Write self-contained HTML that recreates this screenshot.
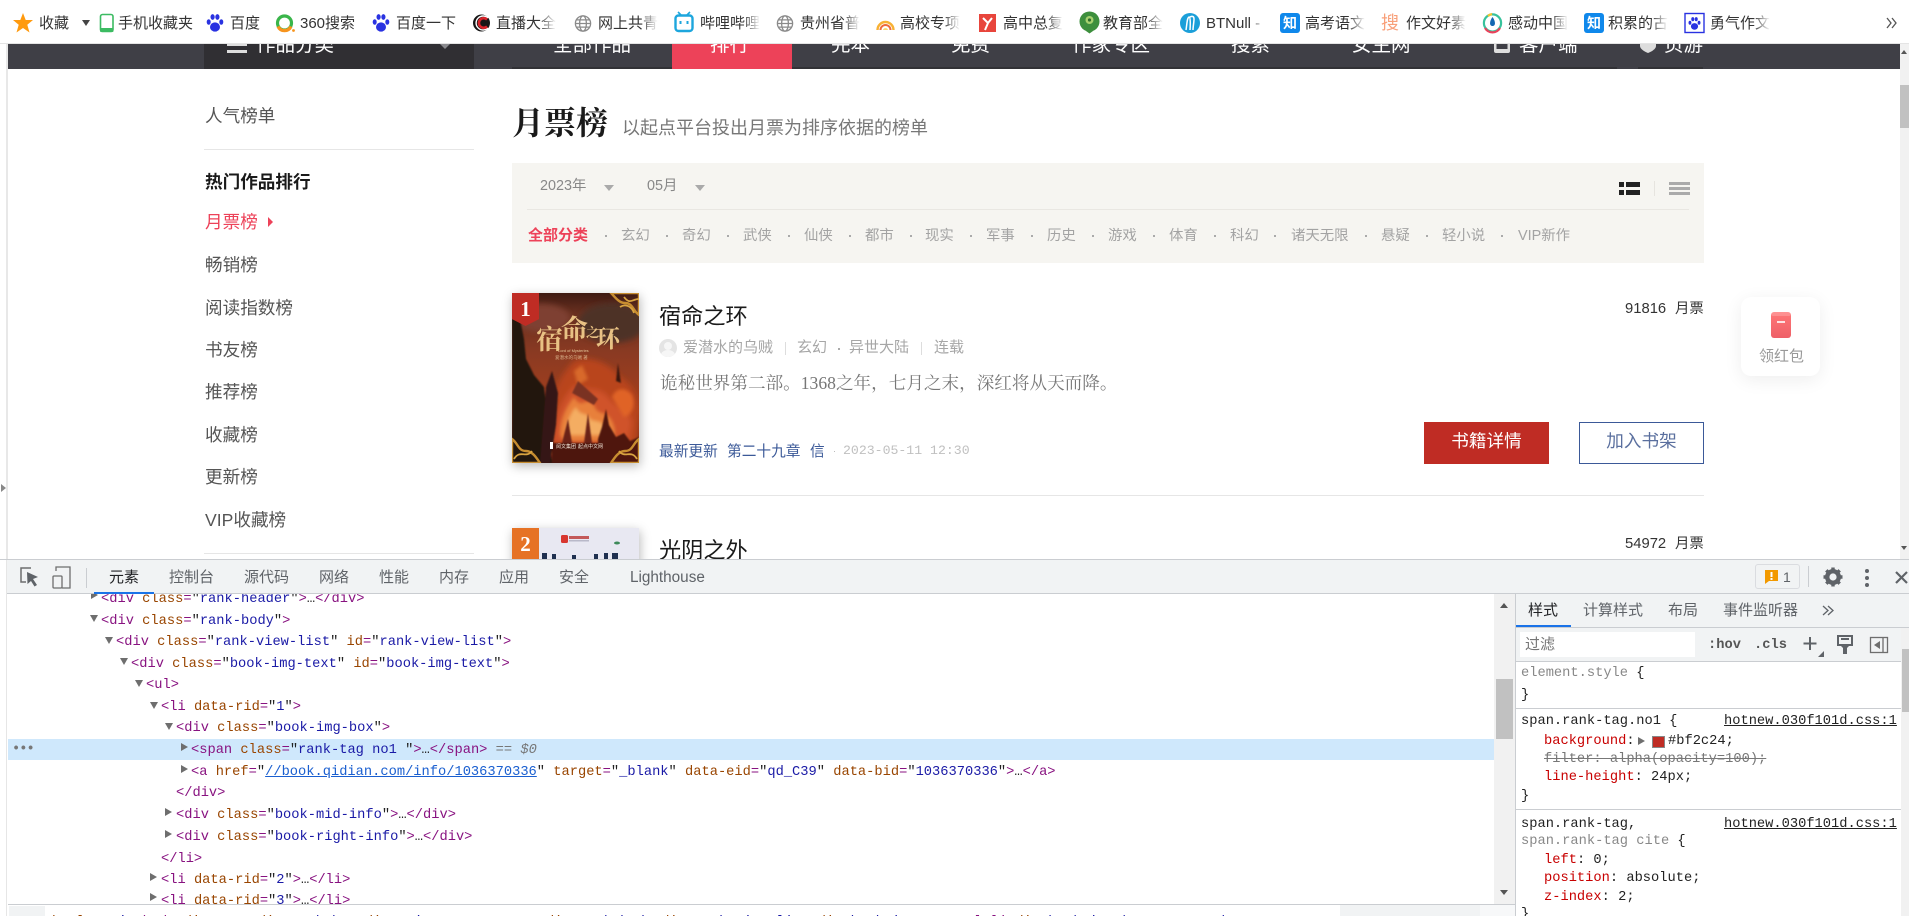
<!DOCTYPE html>
<html lang="zh"><head><meta charset="utf-8"><title>月票榜</title>
<style>
*{box-sizing:border-box;margin:0;padding:0}
html,body{width:1909px;height:916px;overflow:hidden;background:#fff}
body{position:relative;font-family:"Liberation Sans","Noto Sans CJK SC",sans-serif;color:#333}
.a{position:absolute}
.t{position:absolute;white-space:nowrap;line-height:20px}
.bm{font-size:15px;color:#333;top:14px}
.f{width:60px;overflow:hidden;-webkit-mask-image:linear-gradient(90deg,#000 72%,transparent);mask-image:linear-gradient(90deg,#000 72%,transparent)}
.nv{font-size:19.5px;color:#fff;top:35px}
.sd{font-size:17.6px;color:#555;left:205px}
.c{font-size:14.4px;color:#a3a3a3;top:226px}
.d{position:absolute;width:2px;height:2px;background:#aaa;top:235px}
.tb{font-size:15px;color:#5f6368;top:568px}
.m{font-family:"Liberation Mono","Noto Sans CJK SC",monospace;font-size:13.72px;color:#222}
.g{color:#881280}.n{color:#994500}.v{color:#1a1aa6}
.ad,.ar{position:absolute;width:0;height:0}
.ad{border-left:4.5px solid transparent;border-right:4.5px solid transparent;border-top:7px solid #6e6e6e}
.ar{border-top:4.5px solid transparent;border-bottom:4.5px solid transparent;border-left:7px solid #6e6e6e}
.p{color:#c80000}
.l{text-decoration:underline;color:#222}
</style></head><body>

<!-- bookmarks bar -->
<div class="a" style="left:0;top:0;width:1909px;height:44px;background:#fff;border-bottom:1px solid #e4e4e4"></div>
<svg class="a" style="left:0;top:0" width="1909" height="44">
<defs><g id="paw"><ellipse cx="0" cy="4" rx="5" ry="4.6"/><ellipse cx="-6.3" cy="-1" rx="2" ry="2.8"/><ellipse cx="-2.4" cy="-6" rx="2.1" ry="2.9"/><ellipse cx="2.4" cy="-6" rx="2.1" ry="2.9"/><ellipse cx="6.3" cy="-1" rx="2" ry="2.8"/></g>
<g id="globe" fill="none" stroke="#8a8a8a" stroke-width="1.3"><circle r="7.6"/><ellipse rx="3.4" ry="7.6"/><path d="M-7.6 0H7.6M-6.6-3.6H6.6M-6.6 3.6H6.6"/></g></defs>
<polygon points="23,13 25.700,20 33,20 27.300,24.800 29.500,32.500 23,28 16.500,32.500 18.700,24.800 13,20 20.300,20" fill="#ff9a0e"/>
<polygon points="82,20 90,20 86,26" fill="#444"/>
<rect x="100.5" y="14.5" width="12.5" height="17" rx="2" fill="#fff" stroke="#3cbb62" stroke-width="1.600"/><rect x="100" y="28" width="13.5" height="4" rx="1" fill="#3cbb62"/>
<use href="#paw" x="215" y="23" fill="#2932e1"/>
<circle cx="284.5" cy="23" r="7" fill="none" stroke="#3ab54a" stroke-width="3.2"/><path d="M278 26.500a7.200 7.200 0 0 0 13 0" fill="none" stroke="#f7941d" stroke-width="3.2"/><circle cx="293.500" cy="30.500" r="1.4" fill="#f7941d"/>
<use href="#paw" x="381" y="23" fill="#2932e1"/>
<circle cx="481.5" cy="23" r="8.5" fill="#161616"/><path d="M488 18a7 7 0 1 0 0 10" fill="none" stroke="#fff" stroke-width="1.4"/><path d="M487 19.5a4.8 4.8 0 1 0 0 7" fill="none" stroke="#d8232a" stroke-width="2.6"/>
<use href="#globe" x="583" y="23.5"/>
<path d="M678 12l3 3M690 12l-3 3" stroke="#1da6dd" stroke-width="1.6"/><rect x="675.5" y="15.5" width="17" height="15.5" rx="3" fill="#fff" stroke="#1da6dd" stroke-width="2.4"/><rect x="679.5" y="21" width="2" height="3" fill="#1da6dd"/><rect x="686.5" y="21" width="2" height="3" fill="#1da6dd"/>
<use href="#globe" x="785" y="23.5"/>
<path d="M877.5 30a8 8 0 0 1 16 0" fill="none" stroke="#f8b133" stroke-width="2.4"/><path d="M880.5 30a5 5 0 0 1 10 0" fill="none" stroke="#ee6a3c" stroke-width="2"/><path d="M883 30a2.6 2.6 0 0 1 5 0" fill="#f8d66b"/>
<rect x="979" y="14" width="17" height="18" fill="#e8453c"/><path d="M983 18l5 5 4-5M988 23l-3 7" stroke="#fff" stroke-width="2" fill="none"/>
<circle cx="1089.5" cy="21.5" r="10" fill="#3d8f3d"/><path d="M1086 31l3.5 2.5 3.5-2.5z" fill="#3d8f3d"/><circle cx="1089.5" cy="20" r="4" fill="#a6d16f"/><circle cx="1089.5" cy="20" r="1.6" fill="#2d6e2d"/>
<circle cx="1190" cy="23" r="10" fill="#1b9fd9"/><path d="M1186 30c1-6 1-12 3-13 2 0 1 13 1 13M1190 17c2-1 4-1 4 2 0 3-1 8-1 11" fill="none" stroke="#fff" stroke-width="1.5"/>
<rect x="1280" y="13" width="20" height="20" rx="3" fill="#0f88eb"/>
<circle cx="1492.5" cy="23" r="8.6" fill="#fff" stroke="#38c29c" stroke-width="2.2"/><path d="M1485 28a8.6 8.6 0 0 0 15 0" fill="none" stroke="#e9415b" stroke-width="2.2"/><path d="M1488 16a8.6 8.6 0 0 1 4-2" fill="none" stroke="#f7c32e" stroke-width="2.2"/><path d="M1492.5 17c-3 4-3.500 9 0 9s3-5 0-9z" fill="#1367b2"/>
<rect x="1584" y="13" width="20" height="20" rx="3" fill="#0f88eb"/>
<rect x="1685" y="13.500" width="19" height="19" fill="#fff" stroke="#2932e1" stroke-width="1.400"/><use href="#paw" transform="translate(1694.500 23.500) scale(.72)" fill="#2932e1"/>
<path d="M1887 18l4 5-4 5M1892 18l4 5-4 5" stroke="#555" stroke-width="1.300" fill="none"/>
</svg>
<div class="t" style="left:1283px;top:13px;font-size:14px;color:#fff;font-weight:700">知</div>
<div class="t" style="left:1587px;top:13px;font-size:14px;color:#fff;font-weight:700">知</div>
<div class="t" style="left:1381px;top:13px;font-size:18px;color:#f8a07a">搜</div>
<div class="t bm" style="left:39px">收藏</div>
<div class="t bm" style="left:118px">手机收藏夹</div>
<div class="t bm" style="left:230px">百度</div>
<div class="t bm" style="left:300px">360搜索</div>
<div class="t bm" style="left:396px">百度一下</div>
<div class="t bm f" style="left:496px">直播大全</div>
<div class="t bm f" style="left:598px">网上共青</div>
<div class="t bm f" style="left:700px">哔哩哔哩</div>
<div class="t bm f" style="left:800px">贵州省普</div>
<div class="t bm f" style="left:900px">高校专项</div>
<div class="t bm f" style="left:1003px">高中总复</div>
<div class="t bm f" style="left:1103px">教育部全</div>
<div class="t bm f" style="left:1206px">BTNull -</div>
<div class="t bm f" style="left:1305px">高考语文</div>
<div class="t bm f" style="left:1406px">作文好素</div>
<div class="t bm f" style="left:1508px">感动中国</div>
<div class="t bm f" style="left:1608px">积累的古</div>
<div class="t bm f" style="left:1710px">勇气作文</div>

<!-- page viewport -->
<div class="a" style="left:0;top:44px;width:1909px;height:515px;overflow:hidden;background:#fff">
 <div style="position:absolute;left:-0px;top:-44px;width:1909px;height:603px">
  <div class="a" style="left:6px;top:44px;width:2px;height:515px;background:#e8e8e8"></div>
  <!-- nav -->
  <div class="a" style="left:8px;top:44px;width:1892px;height:25px;background:#3f3f46"></div>
  <div class="a" style="left:204px;top:44px;width:270px;height:25px;background:#302f33"></div>
  <div class="a" style="left:512px;top:67px;width:160px;height:2px;background:#323236"></div>
  <div class="a" style="left:792px;top:67px;width:825px;height:2px;background:#323236"></div>
  <div class="a" style="left:1638px;top:67px;width:65px;height:2px;background:#323236"></div>
  <div class="a" style="left:672px;top:44px;width:120px;height:25px;background:#ed4259"></div>
  <div class="a" style="left:227px;top:44px;width:20px;height:2px;background:#ddd"></div>
  <div class="a" style="left:227px;top:50px;width:20px;height:3px;background:#ddd"></div>
  <div class="a" style="left:440px;top:44px;width:0;height:0;border-left:5px solid transparent;border-right:5px solid transparent;border-top:5px solid #8a8a8e"></div>
  <div class="t nv" style="left:256px">作品分类</div>
  <div class="t nv" style="left:553px">全部作品</div>
  <div class="t nv" style="left:710px">排行</div>
  <div class="t nv" style="left:831px">完本</div>
  <div class="t nv" style="left:951px">免费</div>
  <div class="t nv" style="left:1072px">作家专区</div>
  <div class="t nv" style="left:1231px">搜索</div>
  <div class="t nv" style="left:1352px">女生网</div>
  <svg class="a" style="left:1494px;top:44px" width="16" height="10"><rect x="0" y="-6" width="16" height="15" rx="2" fill="#ddd"/><rect x="2.500" y="0" width="11" height="5" fill="#3f3f46"/></svg>
  <div class="t nv" style="left:1519px">客户端</div>
  <svg class="a" style="left:1640px;top:44px" width="16" height="10"><path d="M0 0H16V2C16 5 11 8 8 9 5 8 0 5 0 2Z" fill="#ddd"/></svg>
  <div class="t nv" style="left:1664px">页游</div>

  <!-- sidebar -->
  <div class="t sd" style="top:106px">人气榜单</div>
  <div class="a" style="left:204px;top:149px;width:270px;height:1px;background:#e6e6e6"></div>
  <div class="t sd" style="top:172px;color:#1a1a1a;font-weight:700">热门作品排行</div>
  <div class="t sd" style="top:212px;color:#ed4259">月票榜</div>
  <div class="a" style="left:268px;top:217px;width:0;height:0;border-top:5px solid transparent;border-bottom:5px solid transparent;border-left:5px solid #ed4259"></div>
  <div class="t sd" style="top:255px">畅销榜</div>
  <div class="t sd" style="top:298px">阅读指数榜</div>
  <div class="t sd" style="top:340px">书友榜</div>
  <div class="t sd" style="top:382px">推荐榜</div>
  <div class="t sd" style="top:425px">收藏榜</div>
  <div class="t sd" style="top:467px">更新榜</div>
  <div class="t sd" style="top:510px">VIP收藏榜</div>
  <div class="a" style="left:204px;top:553px;width:270px;height:1px;background:#e6e6e6"></div>

  <!-- header -->
  <div class="t" style="left:512px;top:103px;line-height:40px;font-family:'Liberation Serif','Noto Serif CJK SC',serif;font-weight:700;font-size:32px;color:#1a1a1a">月票榜</div>
  <div class="t" style="left:622px;top:118px;font-size:18px;color:#777">以起点平台投出月票为排序依据的榜单</div>

  <!-- filter -->
  <div class="a" style="left:512px;top:163px;width:1192px;height:100px;background:#f6f5f1"></div>
  <div class="a" style="left:527px;top:209px;width:1162px;height:1px;background:#e9e7e2"></div>
  <div class="t" style="left:540px;top:176px;font-size:14.400px;color:#888">2023年</div>
  <div class="a" style="left:604px;top:185px;width:0;height:0;border-left:5px solid transparent;border-right:5px solid transparent;border-top:6px solid #aaa"></div>
  <div class="t" style="left:647px;top:176px;font-size:14.400px;color:#888">05月</div>
  <div class="a" style="left:695px;top:185px;width:0;height:0;border-left:5px solid transparent;border-right:5px solid transparent;border-top:6px solid #aaa"></div>
  <svg class="a" style="left:1619px;top:181px" width="72" height="16">
   <path d="M0 1h5v5H0zM7 1h14v5H7zM0 9h5v5H0zM7 9h14v5H7z" fill="#222"/>
   <rect x="35" y="-2" width="1" height="17" fill="#e6e4df"/>
   <path d="M50 1h21v3H50zM50 6h21v3H50zM50 11h21v3H50z" fill="#aaa"/>
  </svg>
  <div class="t" style="left:528px;top:226px;font-size:15px;color:#ed4259;font-weight:700">全部分类</div>
  <div class="d" style="left:605px"></div><div class="t c" style="left:621px">玄幻</div>
  <div class="d" style="left:666px"></div><div class="t c" style="left:682px">奇幻</div>
  <div class="d" style="left:727px"></div><div class="t c" style="left:743px">武侠</div>
  <div class="d" style="left:788px"></div><div class="t c" style="left:804px">仙侠</div>
  <div class="d" style="left:849px"></div><div class="t c" style="left:865px">都市</div>
  <div class="d" style="left:910px"></div><div class="t c" style="left:925px">现实</div>
  <div class="d" style="left:970px"></div><div class="t c" style="left:986px">军事</div>
  <div class="d" style="left:1031px"></div><div class="t c" style="left:1047px">历史</div>
  <div class="d" style="left:1092px"></div><div class="t c" style="left:1108px">游戏</div>
  <div class="d" style="left:1153px"></div><div class="t c" style="left:1169px">体育</div>
  <div class="d" style="left:1214px"></div><div class="t c" style="left:1230px">科幻</div>
  <div class="d" style="left:1274px"></div><div class="t c" style="left:1291px">诸天无限</div>
  <div class="d" style="left:1365px"></div><div class="t c" style="left:1381px">悬疑</div>
  <div class="d" style="left:1426px"></div><div class="t c" style="left:1442px">轻小说</div>
  <div class="d" style="left:1501px"></div><div class="t c" style="left:1518px">VIP新作</div>

  <!-- book 1 -->
  <div class="a" style="left:512px;top:293px;width:127px;height:170px;box-shadow:1px 3px 10px rgba(0,0,0,.28)">
   <svg width="127" height="170" style="display:block">
    <defs>
     <linearGradient id="bg" x1="0" y1="0" x2="0" y2="1"><stop offset="0" stop-color="#3e1a12"/><stop offset=".12" stop-color="#6a3020"/><stop offset=".35" stop-color="#8a3a22"/><stop offset=".7" stop-color="#a8401c"/><stop offset="1" stop-color="#3a140c"/></linearGradient>
     <filter id="b1" x="-20%" y="-20%" width="140%" height="140%"><feGaussianBlur stdDeviation="3"/></filter>
     <filter id="b3" x="-20%" y="-20%" width="140%" height="140%"><feGaussianBlur stdDeviation="1.500"/></filter>
     <filter id="b2"><feGaussianBlur stdDeviation=".8"/></filter>
    </defs>
    <rect width="127" height="170" fill="url(#bg)"/>
    <ellipse cx="100" cy="30" rx="34" ry="20" fill="#4e3026" filter="url(#b1)"/>
    <ellipse cx="30" cy="25" rx="28" ry="14" fill="#7e4030" filter="url(#b1)"/>
    <g filter="url(#b1)">
     <path d="M32 165C30 120 44 86 62 68 78 62 98 70 108 84 122 92 127 104 127 132V165Z" fill="#b9441a"/>
     <path d="M42 150C40 128 50 104 64 92 74 100 86 92 96 104 106 116 116 112 120 130L116 150Z" fill="#d0522a"/>
    </g>
    <g filter="url(#b3)">
     <path d="M48 142C48 124 56 112 62 104 70 118 74 102 82 112 86 124 94 116 100 128 104 136 104 142 100 148H52Z" fill="#e8803a"/>
     <path d="M54 136C56 126 60 118 64 114 68 124 74 118 78 126 84 130 90 126 94 136V142H56Z" fill="#f4ad62"/>
     <path d="M100 104C104 94 114 94 120 102 124 112 120 122 112 124Z" fill="#e06428"/>
     <path d="M62 78L70 72 76 86 66 92Z" fill="#d8692c"/>
    </g>
    <g filter="url(#b2)">
     <path d="M0 20L8 26 12 46 14 66 22 82 32 94 36 128 40 170H0Z" fill="#241210"/>
     <path d="M34 94L40 78 46 100 44 132 38 170H28Z" fill="#341712"/>
     <path d="M86 170V146L90 134 94 116 97 132 104 144 112 140 118 148 127 144V170Z" fill="#4f1911"/>
     <path d="M104 88L106 70 109 90Z" fill="#3a1610"/>
     <path d="M60 100L66 88 86 106 82 112Z" fill="#7a3020"/>
     <path d="M40 170V150H88V170Z" fill="#4e170c"/>
     <path d="M50 150L56 126 60 150ZM72 150L76 120 80 150Z" fill="#6a2012"/>
    </g>
    <path d="M0 170V146C6 150 6 158 14 158 20 158 24 164 28 170ZM127 170V146C121 150 121 158 113 158 107 158 103 164 99 170ZM127 0V22C121 18 121 10 113 10 107 10 103 4 99 0Z" fill="none" stroke="#c78d30" stroke-width="2.400"/>
    <path d="M127 6C120 6 118 12 112 4M2 166C8 156 14 166 20 158M125 166C119 156 113 166 107 158M108 14C114 10 120 14 122 20" fill="none" stroke="#d9a441" stroke-width="1.800"/>
    <g font-family="'Liberation Serif','Noto Serif CJK SC',serif" font-weight="700" fill="#e8c184">
     <text x="24" y="56" font-size="27">宿</text>
     <text x="49" y="46" font-size="27">命</text>
     <text x="74" y="44" font-size="13">之</text>
     <text x="84" y="54" font-size="24">环</text>
    </g>
    <text x="46" y="59" font-size="4" fill="#e6c79a">Lord of Mysteries</text>
    <text x="43" y="66" font-size="4.500" fill="#d8b08a">爱潜水的乌贼 著</text>
    <rect x="38" y="149" width="3" height="7" fill="#fff"/>
    <text x="44" y="155" font-size="5" fill="#f3e6d8">阅文集团</text>
    <text x="66" y="155" font-size="5" fill="#f3e6d8">起点中文网</text>
   </svg>
  </div>
  <div class="a" style="left:512px;top:293px;width:27px;height:33px;background:#bf2c24;clip-path:polygon(0 0,100% 0,100% 79%,50% 100%,0 79%)"></div>
  <div class="t" style="left:512px;top:297px;width:27px;text-align:center;line-height:24px;font-family:'Liberation Serif',serif;font-weight:700;font-size:21px;color:#fff">1</div>

  <div class="t" style="left:659px;top:306px;line-height:22px;font-size:22.200px;color:#1a1a1a">宿命之环</div>
  <div class="a" style="left:659px;top:339px;width:18px;height:18px;border-radius:50%;background:#e4e4e4;overflow:hidden"><div class="a" style="left:5px;top:3px;width:8px;height:8px;border-radius:50%;background:#f6f6f6"></div><div class="a" style="left:2px;top:11px;width:14px;height:10px;border-radius:50%;background:#f6f6f6"></div></div>
  <div class="t" style="left:683px;top:338px;font-size:15px;color:#a6a6a6">爱潜水的乌贼</div>
  <div class="a" style="left:785px;top:342px;width:1px;height:13px;background:#ddd"></div>
  <div class="t" style="left:797px;top:338px;font-size:15px;color:#a6a6a6">玄幻</div>
  <div class="a" style="left:838px;top:348px;width:2px;height:2px;background:#aaa"></div>
  <div class="t" style="left:849px;top:338px;font-size:15px;color:#a6a6a6">异世大陆</div>
  <div class="a" style="left:921px;top:342px;width:1px;height:13px;background:#ddd"></div>
  <div class="t" style="left:934px;top:338px;font-size:15px;color:#a6a6a6">连载</div>
  <div class="t" style="left:660px;top:373px;font-size:17.600px;color:#777;font-family:'Liberation Serif','Noto Serif CJK SC',serif">诡秘世界第二部。1368之年&#xFF0C;七月之末&#xFF0C;深红将从天而降。</div>
  <div class="t" style="left:659px;top:442px;font-size:14.700px;color:#3b5998">最新更新</div>
  <div class="t" style="left:727px;top:442px;font-size:14.700px;color:#3b5998">第二十九章</div>
  <div class="t" style="left:810px;top:442px;font-size:14.700px;color:#3b5998">信</div>
  <div class="a" style="left:834px;top:451px;width:1px;height:1px;background:#bbb"></div>
  <div class="t" style="left:843px;top:441px;font-size:13.200px;color:#c0c0c0;font-family:'Liberation Mono',monospace">2023-05-11 12:30</div>

  <div class="t" style="left:1625px;top:299px;font-size:14.800px;color:#333">91816</div>
  <div class="t" style="left:1675px;top:299px;font-size:14.400px;color:#333">月票</div>

  <div class="a" style="left:1424px;top:422px;width:125px;height:42px;background:#bf2c24"></div>
  <div class="t" style="left:1424px;top:431px;width:125px;text-align:center;font-size:17.600px;color:#fff">书籍详情</div>
  <div class="a" style="left:1579px;top:422px;width:125px;height:42px;border:1.500px solid #3b5998"></div>
  <div class="t" style="left:1579px;top:431px;width:125px;text-align:center;font-size:17.600px;color:#5a6f9e">加入书架</div>

  <div class="a" style="left:512px;top:495px;width:1192px;height:1px;background:#e6e6e6"></div>

  <!-- book 2 -->
  <div class="a" style="left:512px;top:528px;width:127px;height:170px;background:#e8e8f2;box-shadow:1px 3px 10px rgba(0,0,0,.28);overflow:hidden">
   <svg width="127" height="40" style="display:block">
    <rect x="49" y="7" width="7" height="8" rx="1.500" fill="#d8362f"/>
    <rect x="57" y="8" width="20" height="3" fill="#c45a5a"/><rect x="57" y="12" width="20" height="1.500" fill="#b9b9c9"/>
    <ellipse cx="105" cy="15" rx="3" ry="1.500" fill="#3e8a5a"/>
    <path d="M30 25h5v8h-5zM40 26h4v7h-4zM60 27h4v6h-4zM82 26h4v7h-4zM92 25h4v8h-4zM100 25h6v8h-6z" fill="#1f3050"/>
   </svg>
  </div>
  <div class="a" style="left:512px;top:528px;width:27px;height:33px;background:#e67225"></div>
  <div class="t" style="left:512px;top:532px;width:27px;text-align:center;line-height:24px;font-family:'Liberation Serif',serif;font-weight:700;font-size:21px;color:#fff">2</div>
  <div class="t" style="left:659px;top:540px;line-height:22px;font-size:22.200px;color:#1a1a1a">光阴之外</div>
  <div class="t" style="left:1625px;top:534px;font-size:14.800px;color:#333">54972</div>
  <div class="t" style="left:1675px;top:534px;font-size:14.400px;color:#333">月票</div>

  <!-- float -->
  <div class="a" style="left:1741px;top:297px;width:79px;height:79px;background:#fff;border-radius:10px;box-shadow:0 4px 18px rgba(0,0,0,.07)"></div>
  <svg class="a" style="left:1771px;top:312px" width="20" height="26"><defs><linearGradient id="rp" x1="0" y1="0" x2="0" y2="1"><stop offset="0" stop-color="#f77"/><stop offset="1" stop-color="#ee6068"/></linearGradient></defs><rect width="20" height="26" rx="3" fill="url(#rp)"/><rect x="6" y="9" width="8" height="2" fill="#fff" opacity=".8"/><rect width="20" height="4" rx="2" fill="#fff" opacity=".2"/></svg>
  <div class="t" style="left:1759px;top:347px;font-size:15px;color:#999">领红包</div>

  <!-- scrollbar -->
  <div class="a" style="left:1900px;top:44px;width:9px;height:515px;background:#f1f1f1"></div>
  <div class="a" style="left:1900px;top:85px;width:9px;height:43px;background:#c1c1c1"></div>
  <div class="a" style="left:1901px;top:50px;width:0;height:0;border-left:3.500px solid transparent;border-right:3.500px solid transparent;border-bottom:4px solid #555"></div>
  <div class="a" style="left:1901px;top:546px;width:0;height:0;border-left:3.500px solid transparent;border-right:3.500px solid transparent;border-top:4px solid #555"></div>
  <div class="a" style="left:1px;top:484px;width:0;height:0;border-top:4px solid transparent;border-bottom:4px solid transparent;border-left:5px solid #888"></div>
 </div>
</div>

<!-- devtools -->
<div class="a" style="left:0;top:559px;width:1909px;height:357px;background:#fff"></div>
<div class="a" style="left:0;top:559px;width:7px;height:357px;background:#fff;border-right:1px solid #e6e6e6"></div>
<div class="a" style="left:7px;top:560px;width:1902px;height:34px;background:#f1f3f4;border-bottom:1px solid #cacdd1"></div>
<div class="a" style="left:0;top:559px;width:1909px;height:1px;background:#cacdd1"></div>
<svg class="a" style="left:18px;top:565px" width="60" height="25" fill="none">
 <path d="M13 3H3V17H8" stroke="#6e6e6e" stroke-width="1.500"/><path d="M9 7L20 12 15 14 19 20 16.500 21.500 13 16 9.500 19Z" fill="#5f6368"/>
 <rect x="35" y="11" width="9" height="12" rx="1" stroke="#6e6e6e" stroke-width="1.300"/><path d="M38 6V2H52V23H44" stroke="#6e6e6e" stroke-width="1.300"/>
</svg>
<div class="a" style="left:86px;top:568px;width:1px;height:20px;background:#cacdd1"></div>
<div class="a" style="left:94px;top:592px;width:60px;height:2px;background:#1a73e8"></div>
<div class="t tb" style="left:109px;color:#202124">元素</div>
<div class="t tb" style="left:169px">控制台</div>
<div class="t tb" style="left:244px">源代码</div>
<div class="t tb" style="left:319px">网络</div>
<div class="t tb" style="left:379px">性能</div>
<div class="t tb" style="left:439px">内存</div>
<div class="t tb" style="left:499px">应用</div>
<div class="t tb" style="left:559px">安全</div>
<div class="t tb" style="left:630px;font-size:15.300px">Lighthouse</div>

<div class="a" style="left:1755px;top:564px;width:45px;height:25px;border:1px solid #dadce0;border-radius:3px;background:#f1f3f4"></div>
<svg class="a" style="left:1764px;top:569px" width="15" height="16"><path d="M1 1H14V12H5L1 15Z" fill="#f29900"/><rect x="6.500" y="3" width="2" height="5" fill="#fff"/><rect x="6.500" y="9" width="2" height="2" fill="#fff"/></svg>
<div class="t" style="left:1783px;top:567px;font-size:14px;color:#5f6368">1</div>
<div class="a" style="left:1808px;top:566px;width:1px;height:21px;background:#cacdd1"></div>
<svg class="a" style="left:1822px;top:566px" width="22" height="22"><circle cx="11" cy="11" r="5.800" fill="none" stroke="#5f6368" stroke-width="4.400"/><path d="M11 1.500V5M11 17V20.500M1.500 11H5M17 11H20.500M4.300 4.300L6.800 6.800M15.200 15.200L17.700 17.700M4.300 17.700L6.800 15.200M15.200 6.800L17.700 4.300" stroke="#5f6368" stroke-width="3.400"/></svg>
<svg class="a" style="left:1863px;top:568px" width="8" height="20" fill="#5f6368"><circle cx="4" cy="3" r="2"/><circle cx="4" cy="10" r="2"/><circle cx="4" cy="17" r="2"/></svg>
<svg class="a" style="left:1894px;top:570px" width="15" height="15"><path d="M2 2L13 13M13 2L2 13" stroke="#5f6368" stroke-width="2.200"/></svg>

<!-- elements panel -->
<div class="a" style="left:8px;top:594px;width:1486px;height:310px;overflow:hidden" id="code">
 <div class="a" style="left:0;top:145px;width:1486px;height:21px;background:#cfe8fc"></div>
 <div class="t m" style="left:4px;top:146px;color:#777;font-weight:700;letter-spacing:-1px">•••</div>
 <div class="ar" style="left:83px;top:-3px"></div><div class="t m" style="left:93px;top:-4px"><span class="g">&lt;div</span> <span class="n">class</span><span class="g">=</span>"<span class="v">rank-header</span>"<span class="g">&gt;</span>…<span class="g">&lt;/div&gt;</span></div>
 <div class="ad" style="left:82px;top:21px"></div><div class="t m" style="left:93px;top:18px"><span class="g">&lt;div</span> <span class="n">class</span><span class="g">=</span>"<span class="v">rank-body</span>"<span class="g">&gt;</span></div>
 <div class="ad" style="left:97px;top:43px"></div><div class="t m" style="left:108px;top:39px"><span class="g">&lt;div</span> <span class="n">class</span><span class="g">=</span>"<span class="v">rank-view-list</span>" <span class="n">id</span><span class="g">=</span>"<span class="v">rank-view-list</span>"<span class="g">&gt;</span></div>
 <div class="ad" style="left:112px;top:64px"></div><div class="t m" style="left:123px;top:61px"><span class="g">&lt;div</span> <span class="n">class</span><span class="g">=</span>"<span class="v">book-img-text</span>" <span class="n">id</span><span class="g">=</span>"<span class="v">book-img-text</span>"<span class="g">&gt;</span></div>
 <div class="ad" style="left:127px;top:86px"></div><div class="t m" style="left:138px;top:82px"><span class="g">&lt;ul&gt;</span></div>
 <div class="ad" style="left:142px;top:108px"></div><div class="t m" style="left:153px;top:104px"><span class="g">&lt;li</span> <span class="n">data-rid</span><span class="g">=</span>"<span class="v">1</span>"<span class="g">&gt;</span></div>
 <div class="ad" style="left:157px;top:129px"></div><div class="t m" style="left:168px;top:125px"><span class="g">&lt;div</span> <span class="n">class</span><span class="g">=</span>"<span class="v">book-img-box</span>"<span class="g">&gt;</span></div>
 <div class="ar" style="left:173px;top:149px"></div><div class="t m" style="left:183px;top:147px"><span class="g">&lt;span</span> <span class="n">class</span><span class="g">=</span>"<span class="v">rank-tag no1 </span>"<span class="g">&gt;</span>…<span class="g">&lt;/span&gt;</span> <span style="color:#777">== <i>$0</i></span></div>
 <div class="ar" style="left:173px;top:171px"></div><div class="t m" style="left:183px;top:169px"><span class="g">&lt;a</span> <span class="n">href</span><span class="g">=</span>"<span style="color:#1a5fd0;text-decoration:underline">//book.qidian.com/info/1036370336</span>" <span class="n">target</span><span class="g">=</span>"<span class="v">_blank</span>" <span class="n">data-eid</span><span class="g">=</span>"<span class="v">qd_C39</span>" <span class="n">data-bid</span><span class="g">=</span>"<span class="v">1036370336</span>"<span class="g">&gt;</span>…<span class="g">&lt;/a&gt;</span></div>
 <div class="t m" style="left:168px;top:190px"><span class="g">&lt;/div&gt;</span></div>
 <div class="ar" style="left:157px;top:214px"></div><div class="t m" style="left:168px;top:212px"><span class="g">&lt;div</span> <span class="n">class</span><span class="g">=</span>"<span class="v">book-mid-info</span>"<span class="g">&gt;</span>…<span class="g">&lt;/div&gt;</span></div>
 <div class="ar" style="left:157px;top:236px"></div><div class="t m" style="left:168px;top:234px"><span class="g">&lt;div</span> <span class="n">class</span><span class="g">=</span>"<span class="v">book-right-info</span>"<span class="g">&gt;</span>…<span class="g">&lt;/div&gt;</span></div>
 <div class="t m" style="left:153px;top:256px"><span class="g">&lt;/li&gt;</span></div>
 <div class="ar" style="left:142px;top:279px"></div><div class="t m" style="left:153px;top:277px"><span class="g">&lt;li</span> <span class="n">data-rid</span><span class="g">=</span>"<span class="v">2</span>"<span class="g">&gt;</span>…<span class="g">&lt;/li&gt;</span></div>
 <div class="ar" style="left:142px;top:299px"></div><div class="t m" style="left:153px;top:298px"><span class="g">&lt;li</span> <span class="n">data-rid</span><span class="g">=</span>"<span class="v">3</span>"<span class="g">&gt;</span>…<span class="g">&lt;/li&gt;</span></div>
</div>
<!-- code scrollbar -->
<div class="a" style="left:1494px;top:594px;width:21px;height:310px;background:#f1f1f1"></div>
<div class="a" style="left:1496px;top:679px;width:17px;height:60px;background:#c1c1c1"></div>
<div class="a" style="left:1500px;top:603px;width:0;height:0;border-left:4.500px solid transparent;border-right:4.500px solid transparent;border-bottom:5px solid #555"></div>
<div class="a" style="left:1500px;top:890px;width:0;height:0;border-left:4.500px solid transparent;border-right:4.500px solid transparent;border-top:5px solid #555"></div>

<!-- breadcrumbs -->
<div class="a" style="left:8px;top:904px;width:1507px;height:1px;background:#cacdd1"></div>
<div class="a" style="left:9px;top:906px;width:36px;height:10px;background:#f1f3f4"></div>
<div class="a" style="left:1340px;top:905px;width:140px;height:11px;background:#f1f3f4"></div>
<div class="a" style="left:1480px;top:905px;width:35px;height:11px;background:#f7f8f9"></div>
<div class="a" style="left:45px;top:905px;width:1280px;height:11px;overflow:hidden">
 <div class="t m" style="left:7px;top:8px"><span class="n">html</span><span class="v">.no-js</span> <span class="g">body</span> <span class="n">div</span><span class="v">.wrap</span> <span class="n">div</span><span class="v">.rank-box</span> <span class="n">div</span><span class="v">.main-content-wrap</span> <span class="n">div</span><span class="v">.rank-body</span> <span class="n">div</span><span class="v">.rank-view-list</span> <span class="n">div</span><span class="v">.book-img-text</span> <span class="g">ul</span> <span class="g">li</span> <span class="n">div</span><span class="v">.book-img-box</span> <span class="n">span</span><span class="v">.rank-tag.no1</span></div>
</div>

<!-- styles panel -->
<div class="a" style="left:1515px;top:594px;width:1px;height:322px;background:#cacdd1"></div>
<div class="a" style="left:1516px;top:594px;width:393px;height:34px;background:#f1f3f4;border-bottom:1px solid #cacdd1"></div>
<div class="a" style="left:1516px;top:625px;width:55px;height:2px;background:#1a73e8"></div>
<div class="t tb" style="left:1528px;top:601px;color:#202124">样式</div>
<div class="t tb" style="left:1583px;top:601px">计算样式</div>
<div class="t tb" style="left:1668px;top:601px">布局</div>
<div class="t tb" style="left:1723px;top:601px">事件监听器</div>
<svg class="a" style="left:1822px;top:604px" width="12" height="13" fill="none" stroke="#5f6368" stroke-width="1.300"><path d="M1 2L6 6.500 1 11M6 2L11 6.500 6 11"/></svg>

<div class="a" style="left:1516px;top:628px;width:393px;height:34px;background:#f1f3f4;border-bottom:1px solid #cacdd1"></div>
<div class="a" style="left:1520px;top:632px;width:175px;height:25px;background:#fff"></div>
<div class="t" style="left:1525px;top:635px;font-size:15px;color:#757575">过滤</div>
<div class="t m" style="left:1708px;top:636px;font-weight:700;color:#555">:hov</div>
<div class="t m" style="left:1754px;top:636px;font-weight:700;color:#555">.cls</div>
<svg class="a" style="left:1802px;top:634px" width="90" height="24" fill="none">
 <path d="M8 3V16M1.500 9.500H14.500" stroke="#5f6368" stroke-width="2"/>
 <path d="M22 17V23H16Z" fill="#5f6368"/>
 <path d="M36 2H50V11H36ZM39 5H47" stroke="#5f6368" stroke-width="2"/><path d="M39 12H47L45 14V20H41V14Z" fill="#5f6368"/>
 <rect x="68.500" y="3.500" width="17" height="15" stroke="#6e6e6e" stroke-width="1.300"/><path d="M81 3.500V18.500" stroke="#6e6e6e" stroke-width="1.300"/><path d="M78 7V15L72 11Z" fill="#6e6e6e"/>
</svg>

<div class="t m" style="left:1521px;top:664px;color:#888">element.style <span style="color:#222">{</span></div>
<div class="t m" style="left:1521px;top:686px">}</div>
<div class="a" style="left:1516px;top:708px;width:385px;height:1px;background:#cacdd1"></div>
<div class="t m" style="left:1521px;top:712px">span.rank-tag.no1 {</div>
<div class="t m l" style="left:1724px;top:712px">hotnew.030f101d.css:1</div>
<div class="t m" style="left:1544px;top:732px"><span class="p">background</span>: </div>
<div class="ar" style="left:1638px;top:737px"></div>
<div class="a" style="left:1652px;top:736px;width:13px;height:12px;background:#bf2c24;border:1px solid #888"></div>
<div class="t m" style="left:1668px;top:732px">#bf2c24;</div>
<div class="t m" style="left:1544px;top:750px;color:#777;text-decoration:line-through">filter: alpha(opacity=100);</div>
<div class="t m" style="left:1544px;top:768px"><span class="p">line-height</span>: 24px;</div>
<div class="t m" style="left:1521px;top:787px">}</div>
<div class="a" style="left:1516px;top:809px;width:385px;height:1px;background:#cacdd1"></div>
<div class="t m" style="left:1521px;top:815px">span.rank-tag,</div>
<div class="t m l" style="left:1724px;top:815px">hotnew.030f101d.css:1</div>
<div class="t m" style="left:1521px;top:832px;color:#888">span.rank-tag cite <span style="color:#222">{</span></div>
<div class="t m" style="left:1544px;top:851px"><span class="p">left</span>: 0;</div>
<div class="t m" style="left:1544px;top:869px"><span class="p">position</span>: absolute;</div>
<div class="t m" style="left:1544px;top:888px"><span class="p">z-index</span>: 2;</div>
<div class="t m" style="left:1521px;top:905px">}</div>
<div class="a" style="left:1901px;top:628px;width:8px;height:288px;background:#f1f1f1"></div>
<div class="a" style="left:1902px;top:649px;width:7px;height:63px;background:#c1c1c1"></div>
</body></html>
